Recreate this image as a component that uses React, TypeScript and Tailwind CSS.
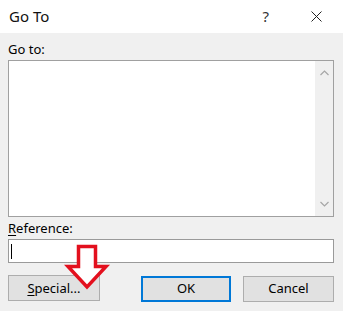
import React from 'react';

const font = { fontFamily: '"Noto Sans", "Open Sans", sans-serif' };

function Chevron({ dir }: { dir: 'up' | 'down' }) {
  return (
    <svg width="9" height="6" viewBox="0 0 9 6" className="block">
      <path
        d={dir === 'up' ? 'M0.5 5 L4.5 1 L8.5 5' : 'M0.5 1 L4.5 5 L8.5 1'}
        fill="none"
        stroke="#a6a6a6"
        strokeWidth="1.2"
      />
    </svg>
  );
}

function DlgButton({ children, width, primary }: { children: React.ReactNode; width: string; primary?: boolean }) {
  return (
    <button
      className={`h-[26px] ${width} bg-[#e1e1e1] text-[13px] text-black leading-none ${
        primary ? 'border-2 border-[#0078d7]' : 'border border-[#adadad]'
      }`}
    >
      {children}
    </button>
  );
}

export default function App() {
  return (
    <div className="relative w-[343px] h-[311px] overflow-hidden bg-[#f0f0f0] text-black" style={font}>
      {/* title bar */}
      <div className="h-[33px] bg-white flex items-center pl-[9px] pr-[21px]">
        <span className="text-[15px] leading-none text-[#111]">Go To</span>
        <span className="ml-auto mr-[42px] text-[15px] text-[#333] leading-none">?</span>
        <svg width="11" height="11" viewBox="0 0 11 11">
          <path d="M0.5 0.5 L10.5 10.5 M10.5 0.5 L0.5 10.5" stroke="#222" strokeWidth="1" />
        </svg>
      </div>

      <div className="px-[8px] pr-[9px]">
        <div className="pt-[9px] pb-[3px] text-[13px] leading-[15px]">Go to:</div>

        <div className="h-[157px] border border-[#a0a0a0] bg-white flex">
          <div className="flex-1" />
          <div className="w-[18px] bg-[#f0f0f0] flex flex-col items-center justify-between py-[9px]">
            <Chevron dir="up" />
            <Chevron dir="down" />
          </div>
        </div>

        <div className="pt-[4px] pb-[3px] text-[13px] leading-[15px]">
          <span className="underline underline-offset-2">R</span>eference:
        </div>

        <div className="h-[24px] border border-[#9a9a9a] bg-white flex items-center pl-[2px]">
          <div className="w-px h-[15px] bg-black" />
        </div>

        <div className="mt-[12px] flex">
          <DlgButton width="w-[92px]">
            <span className="underline underline-offset-2">S</span>pecial...
          </DlgButton>
          <div className="ml-[41px]">
            <DlgButton width="w-[90px]" primary>OK</DlgButton>
          </div>
          <div className="ml-[12px]">
            <DlgButton width="w-[91px]">Cancel</DlgButton>
          </div>
        </div>
      </div>

      {/* red annotation arrow */}
      <svg className="absolute left-[64px] top-[244px]" width="47" height="47" viewBox="0 0 47 47">
        <path
          d="M14.5 2.5 L31.5 2.5 L31.5 22.5 L42 22.5 L23 43 L4 22.5 L14.5 22.5 Z"
          fill="white"
          stroke="#e3101e"
          strokeWidth="3.5"
          strokeLinejoin="miter"
        />
      </svg>
    </div>
  );
}
